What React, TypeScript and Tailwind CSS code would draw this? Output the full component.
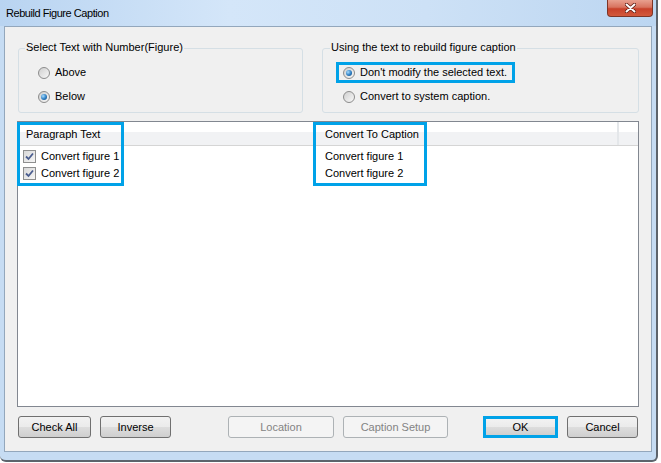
import React from "react";

function Radio({ checked }: { checked?: boolean }) {
  return (
    <span className="flex h-[12px] w-[12px] shrink-0 items-center justify-center rounded-full border border-[#8c8c8c] bg-[linear-gradient(135deg,#cfcfcf,#f8f8f8)]">
      {checked && (
        <span className="h-[6px] w-[6px] rounded-full bg-[radial-gradient(circle_at_35%_35%,#a6dcff,#2b7cc1_55%,#10457a)]" />
      )}
    </span>
  );
}

function RadioRow({ label, checked, marked }: { label: string; checked?: boolean; marked?: boolean }) {
  return (
    <div
      className={`flex h-[21px] w-fit items-center gap-[5px] border-[3px] pl-[4px] pr-[5px] ${
        marked ? "border-[#00a2e8]" : "border-transparent"
      }`}
    >
      <Radio checked={checked} />
      <span>{label}</span>
    </div>
  );
}

function Check() {
  return (
    <span className="flex h-[13px] w-[13px] shrink-0 items-center justify-center border border-[#8e8f8f] bg-[linear-gradient(135deg,#d8d8d8,#f6f6f6)]">
      <svg width="9" height="9" viewBox="0 0 9 9">
        <path d="M1 4.5 L3.5 7 L8 1.5" fill="none" stroke="#4a5d8f" strokeWidth="1.8" />
      </svg>
    </span>
  );
}

function Btn({
  className,
  children,
  disabled,
  marked,
}: {
  className: string;
  children: React.ReactNode;
  disabled?: boolean;
  marked?: boolean;
}) {
  let look =
    "rounded-[3px] border border-[#707070] bg-[linear-gradient(#f2f2f2_0%,#ebebeb_50%,#dddddd_51%,#cfcfcf_100%)] text-black";
  if (disabled) look = "rounded-[3px] border border-[#adb2b5] bg-[#f4f4f4] text-[#838383]";
  if (marked)
    look =
      "border-[3px] border-[#00a2e8] bg-[linear-gradient(#f2f2f2_0%,#ebebeb_50%,#dddddd_51%,#cfcfcf_100%)] text-black";
  return (
    <div className={`flex h-[22px] shrink-0 items-center justify-center ${look} ${className}`}>{children}</div>
  );
}

export default function App() {
  return (
    <div className="h-[463px] w-[661px] bg-white font-['Liberation_Sans',Arial,sans-serif] text-[11px] leading-[13px] text-black">
      <div className="flex h-[462px] w-[658px] flex-col rounded-b-[6px] border-b-2 border-r-2 border-[#5d646c] bg-[#c6dcf3]">
        {/* Title bar */}
        <div className="flex h-[26px] shrink-0 bg-[linear-gradient(90deg,#b9d4f1,#d4e6f9_35%,#cde1f6_65%,#bcd6f1)]">
          <div className="flex flex-1 items-center pl-[6px] text-[11px] tracking-[-0.45px]">Rebuild Figure Caption</div>
          <div className="mr-[3px] flex h-[17px] w-[46px] items-center justify-center rounded-b-[4px] border border-t-0 border-[#7e3526] bg-[linear-gradient(#e8a08f_0%,#d8735f_45%,#c8412a_55%,#d35a3c_100%)]">
            <svg width="11" height="10" viewBox="0 0 11 10">
              <path d="M1.5 1.5 L9.5 8.5 M9.5 1.5 L1.5 8.5" stroke="#5b1a10" strokeWidth="3.6" strokeLinecap="round" />
              <path d="M1.5 1.5 L9.5 8.5 M9.5 1.5 L1.5 8.5" stroke="#ffffff" strokeWidth="2" strokeLinecap="round" />
            </svg>
          </div>
        </div>

        {/* Client area */}
        <div className="ml-[4px] flex h-[426px] w-[648px] flex-col border border-[#93a7bc] bg-[#f0f0f0]">
          {/* Group boxes */}
          <div className="ml-[13px] mt-[21px] flex gap-[19px]">
            <div className="relative h-[65px] w-[285px] rounded-[3px] border border-[#d5dfe5] pl-[12px] pt-[13px]">
              <span className="absolute left-[6px] top-[-8px] bg-[#f0f0f0] px-[1px]">Select Text with Number(Figure)</span>
              <div className="flex flex-col gap-[3px]">
                <RadioRow label="Above" />
                <RadioRow label="Below" checked />
              </div>
            </div>
            <div className="relative h-[65px] w-[317px] rounded-[3px] border border-[#d5dfe5] pl-[13px] pt-[13px]">
              <span className="absolute left-[7px] top-[-8px] bg-[#f0f0f0] px-[1px]">Using the text to rebuild figure caption</span>
              <div className="flex flex-col gap-[3px]">
                <RadioRow label="Don't modify the selected text." checked marked />
                <RadioRow label="Convert to system caption." />
              </div>
            </div>
          </div>

          {/* List view */}
          <div className="relative ml-[12px] mt-[8px] h-[286px] w-[622px] border border-[#828790] bg-white">
            <div className="flex h-[24px] border-b border-[#d5d5d5] bg-[linear-gradient(#ffffff_0%,#ffffff_42%,#f1f2f4_43%,#f1f2f4_100%)]">
              <div className="flex w-[299px] items-center pl-[8px] pt-[2px]">Paragraph Text</div>
              <div className="flex w-[302px] items-center border-r-2 border-[#e4e7ea] pl-[8px] pt-[2px]">Convert To Caption</div>
            </div>
            <div className="flex flex-col pt-[2px]">
              {["Convert figure 1", "Convert figure 2"].map((t) => (
                <div key={t} className="flex h-[17px] items-center">
                  <div className="flex w-[299px] items-center gap-[5px] pl-[5px]">
                    <Check />
                    <span>{t}</span>
                  </div>
                  <div className="pl-[8px]">{t}</div>
                </div>
              ))}
            </div>
            <div className="absolute left-[-1px] top-0 h-[64px] w-[107px] border-[3px] border-[#00a2e8]" />
            <div className="absolute left-[295px] top-0 h-[64px] w-[114px] border-[3px] border-[#00a2e8]" />
          </div>

          {/* Buttons */}
          <div className="ml-[13px] mt-[9px] flex">
            <Btn className="w-[73px]">Check All</Btn>
            <Btn className="ml-[9px] w-[71px]">Inverse</Btn>
            <Btn className="ml-[57px] w-[106px]" disabled>
              Location
            </Btn>
            <Btn className="ml-[9px] w-[105px]" disabled>
              Caption Setup
            </Btn>
            <Btn className="ml-[35px] w-[75px]" marked>
              OK
            </Btn>
            <Btn className="ml-[9px] w-[71px]">Cancel</Btn>
          </div>
        </div>
      </div>
    </div>
  );
}
